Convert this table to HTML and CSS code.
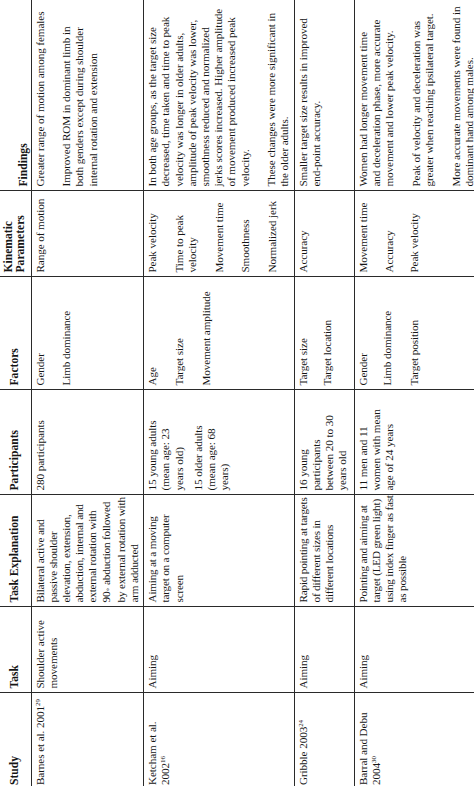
FILE: index.html
```html
<!DOCTYPE html>
<html lang="en">
<head>
<meta charset="utf-8">
<title>Kinematic studies of upper limb movements</title>
<link rel="stylesheet" href="styles.css">
</head>
<body>
<div class="sheet">
  <table class="studies">
    <colgroup>
      <col class="c-study"><col class="c-task"><col class="c-expl"><col class="c-part"><col class="c-fact"><col class="c-kin"><col class="c-find">
    </colgroup>
    <thead>
      <tr class="r-head">
        <th>Study</th>
        <th>Task</th>
        <th>Task Explanation</th>
        <th>Participants</th>
        <th>Factors</th>
        <th>Kinematic<br>Parameters</th>
        <th class="h-find">Findings</th>
      </tr>
    </thead>
    <tbody>
      <tr class="r-barnes">
        <td class="first">Barnes et al. 2001<sup class="ref">29</sup></td>
        <td>Shoulder active<br>movements</td>
        <td class="expl">Bilateral active and<br>passive shoulder<br>elevation, extension,<br>abduction, internal and<br>external rotation with<br>90<span class="deg">∘</span> abduction followed<br>by external rotation with<br>arm adducted</td>
        <td>280 participants</td>
        <td><p>Gender</p><p class="gap">Limb dominance</p></td>
        <td>Range of motion</td>
        <td><p>Greater range of motion among females</p><p class="gap">Improved ROM in dominant limb in<br>both genders except during shoulder<br>internal rotation and extension</p></td>
      </tr>
      <tr class="r-ketcham">
        <td class="first">Ketcham et al.<br>2002<sup class="ref">16</sup></td>
        <td>Aiming</td>
        <td class="expl">Aiming at a moving<br>target on a computer<br>screen</td>
        <td><p>15 young adults<br>(mean age: 23<br>years old)</p><p class="gap-s">15 older adults<br>(mean age: 68<br>years)</p></td>
        <td><p>Age</p><p class="gap">Target size</p><p class="gap">Movement amplitude</p></td>
        <td><p>Peak velocity</p><p class="gap">Time to peak<br>velocity</p><p class="gap">Movement time</p><p class="gap">Smoothness</p><p class="gap">Normalized jerk</p></td>
        <td><p>In both age groups, as the target size<br>decreased, time taken and time to peak<br>velocity was longer in older adults,<br>amplitude of peak velocity was lower,<br>smoothness reduced and normalized<br>jerks scores increased. Higher amplitude<br>of movement produced increased peak<br>velocity.</p><p class="gap">These changes were more significant in<br>the older adults.</p></td>
      </tr>
      <tr class="r-gribble">
        <td class="first">Gribble 2003<sup class="ref">24</sup></td>
        <td>Aiming</td>
        <td class="expl">Rapid pointing at targets<br>of different sizes in<br>different locations</td>
        <td>16 young<br>participants<br>between 20 to 30<br>years old</td>
        <td><p>Target size</p><p class="gap-m">Target location</p></td>
        <td>Accuracy</td>
        <td>Smaller target size results in improved<br>end-point accuracy.</td>
      </tr>
      <tr class="r-barral">
        <td class="first">Barral and Debu<br>2004<sup class="ref">30</sup></td>
        <td>Aiming</td>
        <td class="expl">Pointing and aiming at<br>target (LED green light)<br>using index finger as fast<br>as possible</td>
        <td>11 men and 11<br>women with mean<br>age of 24 years</td>
        <td><p>Gender</p><p class="gap-m">Limb dominance</p><p class="gap">Target position</p></td>
        <td><p>Movement time</p><p class="gap">Accuracy</p><p class="gap-m">Peak velocity</p></td>
        <td><p>Women had longer movement time<br>and deceleration phase, more accurate<br>movement and lower peak velocity.</p><p class="gap">Peak of velocity and deceleration was<br>greater when reaching ipsilateral target.</p><p class="gap">More accurate movements were found in<br>dominant hand among males.</p></td>
      </tr>
    </tbody>
  </table>
</div>
</body>
</html>
```

FILE: styles.css
```css
html, body {
  margin: 0;
  padding: 0;
  overflow: hidden;
  background: #ffffff;
}

body {
  width: 474px;
  height: 786px;
}

/* The table is laid out upright (786 x 474) and turned a quarter counter-clockwise */
.sheet {
  width: 786px;
  height: 474px;
  overflow: hidden;
  background: #ffffff;
  transform-origin: 0 0;
  transform: translateY(786px) rotate(-90deg);
}

.studies {
  border-collapse: collapse;
  table-layout: fixed;
  width: 830px;
  font-family: "Liberation Serif", "Times New Roman", serif;
  font-size: 11.2px;
  line-height: 13.2px;
  letter-spacing: -0.1px;
  color: #161616;
}

.c-study { width: 93px; }
.c-task { width: 86px; }
.c-expl { width: 112px; }
.c-part { width: 105px; }
.c-fact { width: 113px; }
.c-kin { width: 86px; }
.c-find { width: 235px; }

.studies th,
.studies td {
  padding: 2px 0 2px 4px;
  text-align: left;
  white-space: nowrap;
  border: 1px solid #2a2a2a;
}

.studies th {
  font-weight: bold;
  vertical-align: middle;
  border-top: none;
  font-size: 11.6px;
  line-height: 12px;
  letter-spacing: 0;
}

.studies td {
  vertical-align: top;
}

.studies td.expl {
  letter-spacing: -0.2px;
}

.studies th:first-child,
.studies td.first {
  border-left: none;
  padding-left: 1px;
}

.studies th.h-find {
  vertical-align: bottom;
  padding-bottom: 1px;
}

.r-head { height: 31px; }
.r-barnes { height: 110px; }
.r-ketcham { height: 150px; }
.r-gribble { height: 60px; }
.r-barral { height: 150px; }

.studies p {
  margin: 0;
}

.studies p.gap { margin-top: 13.5px; }
.studies p.gap-m { margin-top: 11.5px; }
.studies p.gap-s { margin-top: 6px; }

.ref {
  font-size: 7px;
  line-height: 0;
  vertical-align: 4px;
}

.deg {
  font-family: "DejaVu Sans", sans-serif;
  font-size: 7px;
}
```
